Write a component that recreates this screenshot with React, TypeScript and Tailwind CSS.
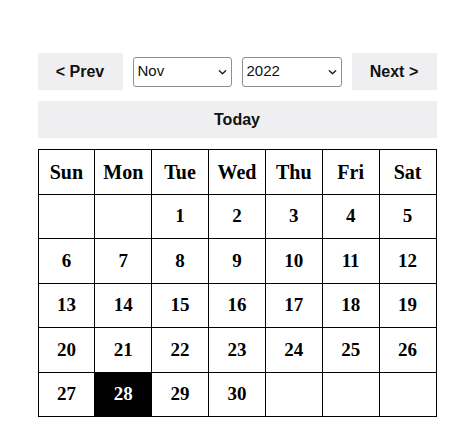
import { useState } from "react";

const MONTHS = ["Jan", "Feb", "Mar", "Apr", "May", "Jun", "Jul", "Aug", "Sep", "Oct", "Nov", "Dec"];
const YEARS = Array.from({ length: 21 }, (_, i) => 2012 + i);
const DAYS = ["Sun", "Mon", "Tue", "Wed", "Thu", "Fri", "Sat"];

function buildWeeks(year: number, month: number): (number | null)[][] {
  const first = new Date(year, month, 1).getDay();
  const count = new Date(year, month + 1, 0).getDate();
  const cells: (number | null)[] = [];
  for (let i = 0; i < first; i++) cells.push(null);
  for (let d = 1; d <= count; d++) cells.push(d);
  while (cells.length % 7 !== 0) cells.push(null);
  const weeks: (number | null)[][] = [];
  for (let i = 0; i < cells.length; i += 7) weeks.push(cells.slice(i, i + 7));
  return weeks;
}

function Chevron() {
  return (
    <svg className="pointer-events-none absolute right-[5px] top-1/2 h-[9px] w-[9px] -translate-y-1/2" viewBox="0 0 10 10" fill="none">
      <path d="M1.5 3.5 5 7l3.5-3.5" stroke="#222" strokeWidth="1.6" strokeLinecap="round" strokeLinejoin="round" />
    </svg>
  );
}

function Picker({ value, options, onChange, width }: { value: string; options: string[]; onChange: (v: string) => void; width: string }) {
  return (
    <div className={`relative ${width}`}>
      <select
        value={value}
        onChange={(e) => onChange(e.target.value)}
        className="h-[30px] w-full appearance-none rounded-[3px] border border-[#8f8f8f] bg-white pl-[4px] pr-6 text-[15px] text-[#111] outline-none [font-family:'Liberation_Sans',Arial,sans-serif]"
      >
        {options.map((o) => (
          <option key={o} value={o}>
            {o}
          </option>
        ))}
      </select>
      <Chevron />
    </div>
  );
}

export default function App() {
  const [month, setMonth] = useState(10);
  const [year, setYear] = useState(2022);
  const selected = { y: 2022, m: 10, d: 28 };
  const weeks = buildWeeks(year, month);

  const shift = (delta: number) => {
    const n = new Date(year, month + delta, 1);
    setMonth(n.getMonth());
    setYear(n.getFullYear());
  };

  const btn =
    "h-[37px] bg-[#efeff1] text-[16px] font-bold text-[#111] [font-family:'Liberation_Sans',Arial,sans-serif]";

  return (
    <div className="min-h-screen bg-white">
      <div className="mx-auto w-[399px] pt-[53px]">
        <div className="flex items-center justify-between">
          <button type="button" className={`${btn} w-[85px]`} onClick={() => shift(-1)}>
            &lt; Prev
          </button>
          <Picker value={MONTHS[month]} options={MONTHS} width="w-[99px]" onChange={(v) => setMonth(MONTHS.indexOf(v))} />
          <Picker value={String(year)} options={YEARS.map(String)} width="w-[100px]" onChange={(v) => setYear(Number(v))} />
          <button type="button" className={`${btn} w-[85px]`} onClick={() => shift(1)}>
            Next &gt;
          </button>
        </div>

        <button
          type="button"
          className={`${btn} mt-[11px] block h-[36px] w-full`}
          onClick={() => {
            setMonth(selected.m);
            setYear(selected.y);
          }}
        >
          Today
        </button>

        <table className="mt-[11px] w-full table-fixed border-collapse border border-[#555] [font-family:'Liberation_Serif','Times_New_Roman',serif]">
          <thead>
            <tr className="h-[45px]">
              {DAYS.map((d) => (
                <th key={d} className="border border-black text-[20px] font-bold text-black">
                  {d}
                </th>
              ))}
            </tr>
          </thead>
          <tbody>
            {weeks.map((w, i) => (
              <tr key={i} className={i % 2 === 0 ? "h-[44px]" : "h-[45px]"}>
                {w.map((d, j) => {
                  const active = d === selected.d && month === selected.m && year === selected.y;
                  return (
                    <td
                      key={j}
                      className={`border border-black p-0 text-center text-[19px] font-bold ${active ? "bg-black text-white" : "text-black"}`}
                    >
                      {d ?? ""}
                    </td>
                  );
                })}
              </tr>
            ))}
          </tbody>
        </table>
      </div>
    </div>
  );
}
